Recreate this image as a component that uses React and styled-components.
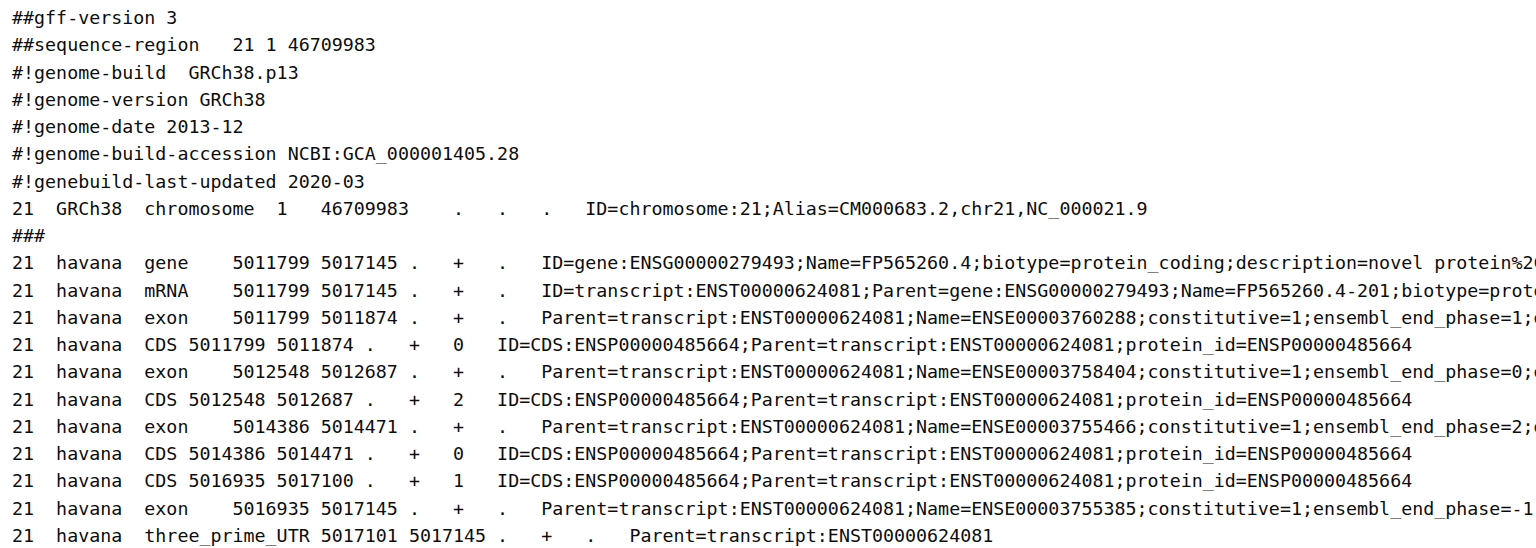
import React from "react";
import styled, { createGlobalStyle } from "styled-components";

const GlobalStyle = createGlobalStyle`
  html, body {
    margin: 0;
    padding: 0;
    background: #ffffff;
    overflow: hidden;
  }
`;

const Viewer = styled.div`
  width: 1536px;
  height: 548px;
  overflow: hidden;
  box-sizing: border-box;
  padding: 4px 0 0 12px;
  background: #ffffff;
`;

const Line = styled.div`
  font-family: "DejaVu Sans Mono", "Liberation Mono", monospace;
  font-size: 18.32px;
  line-height: 27.25px;
  height: 27.25px;
  color: #0d0d0d;
  white-space: pre;
  tab-size: 4;
  -moz-tab-size: 4;
`;

const T = "\t";
const row = (...cols) => cols.join(T);

const lines = [
  "##gff-version 3",
  "##sequence-region   21 1 46709983",
  "#!genome-build  GRCh38.p13",
  "#!genome-version GRCh38",
  "#!genome-date 2013-12",
  "#!genome-build-accession NCBI:GCA_000001405.28",
  "#!genebuild-last-updated 2020-03",
  row("21", "GRCh38", "chromosome", "1", "46709983", ".", ".", ".",
    "ID=chromosome:21;Alias=CM000683.2,chr21,NC_000021.9"),
  "###",
  row("21", "havana", "gene", "5011799", "5017145", ".", "+", ".",
    "ID=gene:ENSG00000279493;Name=FP565260.4;biotype=protein_coding;description=novel protein%2C similar to FAM231A;gene_id=ENSG00000279493;logic_name=havana_homo_sapiens;version=1"),
  row("21", "havana", "mRNA", "5011799", "5017145", ".", "+", ".",
    "ID=transcript:ENST00000624081;Parent=gene:ENSG00000279493;Name=FP565260.4-201;biotype=protein_coding;tag=basic;transcript_id=ENST00000624081;version=1"),
  row("21", "havana", "exon", "5011799", "5011874", ".", "+", ".",
    "Parent=transcript:ENST00000624081;Name=ENSE00003760288;constitutive=1;ensembl_end_phase=1;ensembl_phase=-1;exon_id=ENSE00003760288;rank=1;version=1"),
  row("21", "havana", "CDS", "5011799", "5011874", ".", "+", "0",
    "ID=CDS:ENSP00000485664;Parent=transcript:ENST00000624081;protein_id=ENSP00000485664"),
  row("21", "havana", "exon", "5012548", "5012687", ".", "+", ".",
    "Parent=transcript:ENST00000624081;Name=ENSE00003758404;constitutive=1;ensembl_end_phase=0;ensembl_phase=1;exon_id=ENSE00003758404;rank=2;version=1"),
  row("21", "havana", "CDS", "5012548", "5012687", ".", "+", "2",
    "ID=CDS:ENSP00000485664;Parent=transcript:ENST00000624081;protein_id=ENSP00000485664"),
  row("21", "havana", "exon", "5014386", "5014471", ".", "+", ".",
    "Parent=transcript:ENST00000624081;Name=ENSE00003755466;constitutive=1;ensembl_end_phase=2;ensembl_phase=0;exon_id=ENSE00003755466;rank=3;version=1"),
  row("21", "havana", "CDS", "5014386", "5014471", ".", "+", "0",
    "ID=CDS:ENSP00000485664;Parent=transcript:ENST00000624081;protein_id=ENSP00000485664"),
  row("21", "havana", "CDS", "5016935", "5017100", ".", "+", "1",
    "ID=CDS:ENSP00000485664;Parent=transcript:ENST00000624081;protein_id=ENSP00000485664"),
  row("21", "havana", "exon", "5016935", "5017145", ".", "+", ".",
    "Parent=transcript:ENST00000624081;Name=ENSE00003755385;constitutive=1;ensembl_end_phase=-1;ensembl_phase=2;exon_id=ENSE00003755385;rank=4;version=1"),
  row("21", "havana", "three_prime_UTR", "5017101", "5017145", ".", "+", ".",
    "Parent=transcript:ENST00000624081"),
];

const App = () => (
  <>
    <GlobalStyle />
    <Viewer>
      {lines.map((text, i) => (
        <Line key={i}>{text}</Line>
      ))}
    </Viewer>
  </>
);

export default App;
